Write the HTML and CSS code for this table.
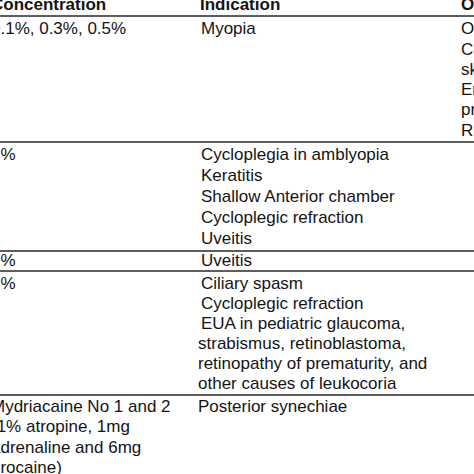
FILE: index.html
```html
<!DOCTYPE html>
<html>
<head>
<meta charset="utf-8">
<link rel="stylesheet" href="styles.css">
</head>
<body>
<div class="frame">
<table class="drugs">
  <colgroup>
    <col class="c-conc">
    <col class="c-ind">
    <col class="c-other">
  </colgroup>
  <thead>
    <tr>
      <th>Concentration</th>
      <th class="ind">Indication</th>
      <th>Other</th>
    </tr>
  </thead>
  <tbody>
    <tr class="r1">
      <td>0.1%, 0.3%, 0.5%</td>
      <td><div class="item">Myopia</div></td>
      <td>Ocular<br>Conjunctivitis<br>skin<br>Erythema<br>pruritus<br>Rash</td>
    </tr>
    <tr class="r2">
      <td>1%</td>
      <td>
        <div class="item">Cycloplegia in amblyopia</div>
        <div class="item">Keratitis</div>
        <div class="item">Shallow Anterior chamber</div>
        <div class="item">Cycloplegic refraction</div>
        <div class="item">Uveitis</div>
      </td>
      <td></td>
    </tr>
    <tr class="r3">
      <td>2%</td>
      <td><div class="item">Uveitis</div></td>
      <td></td>
    </tr>
    <tr class="r4">
      <td>1%</td>
      <td>
        <div class="item">Ciliary spasm</div>
        <div class="item">Cycloplegic refraction</div>
        <div class="item">EUA in pediatric glaucoma,</div>
        <div>strabismus, retinoblastoma,</div>
        <div>retinopathy of prematurity, and</div>
        <div>other causes of leukocoria</div>
      </td>
      <td></td>
    </tr>
    <tr class="r5">
      <td>Mydriacaine No 1 and 2<br>(1% atropine, 1mg<br>adrenaline and 6mg<br>procaine)</td>
      <td>Posterior synechiae</td>
      <td></td>
    </tr>
  </tbody>
</table>
</div>
</body>
</html>
```
FILE: styles.css
```css
html, body {
  margin: 0;
  padding: 0;
  background: #ffffff;
  overflow: hidden;
}
.frame {
  width: 474px;
  height: 474px;
  overflow: hidden;
}
.drugs {
  margin-left: -9px;
  margin-top: -5px;
  border-collapse: collapse;
  table-layout: fixed;
  width: 560px;
  font-family: "Liberation Sans", Arial, sans-serif;
  font-size: 17px;
  line-height: 20.3px;
  color: #141414;
}
.c-conc { width: 207px; }
.c-ind { width: 263px; }
.c-other { width: 90px; }
.drugs th {
  text-align: left;
  font-weight: bold;
  padding: 0;
  border-bottom: 2px solid #5e5e5e;
  vertical-align: top;
}
.drugs th.ind { padding-left: 2px; }
.drugs td {
  vertical-align: top;
  padding: 0;
  border-bottom: 2px solid #5e5e5e;
  white-space: nowrap;
}
.r1 td { padding-top: 2px; padding-bottom: 0; }
.r2 td { padding-top: 2.3px; padding-bottom: 0.5px; line-height: 20.8px; }
.r3 td { padding-top: 0; padding-bottom: 0; line-height: 18px; }
.r4 td { padding-top: 1.8px; padding-bottom: 0.6px; line-height: 20px; }
.r5 td { padding-top: 1px; line-height: 20.2px; border-bottom: none; }
.item { padding-left: 3px; }
```
